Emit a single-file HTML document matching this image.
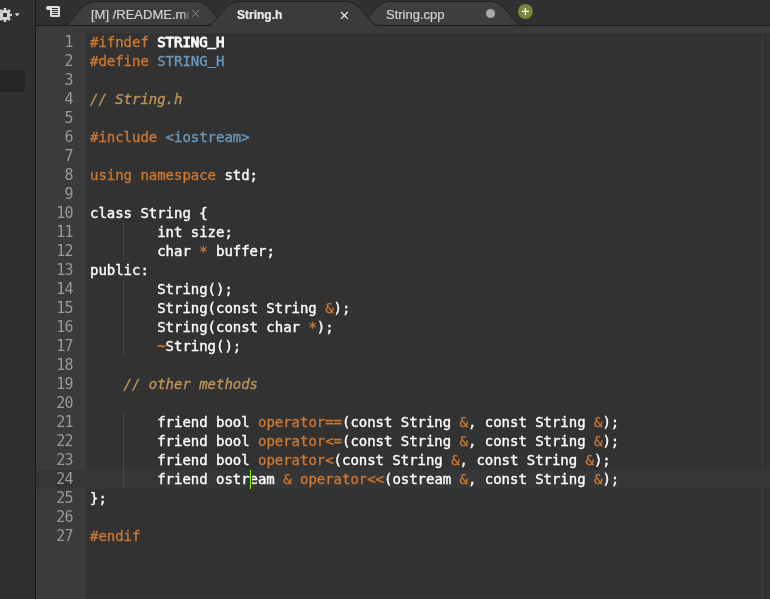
<!DOCTYPE html>
<html><head><meta charset="utf-8">
<style>
html,body{margin:0;padding:0;}
body{width:770px;height:599px;overflow:hidden;background:#323232;position:relative;font-family:"Liberation Sans",sans-serif;}
#side{position:absolute;left:0;top:0;width:35px;height:599px;background:#303030;border-right:1px solid #1b1b1b;}
#sel{position:absolute;left:0;top:70px;width:25px;height:22px;background:#252525;border-radius:0 3px 3px 0;}
#gear{position:absolute;left:0;top:0;}
#tabbar{position:absolute;left:36px;top:0;width:734px;height:25px;background:#303030;}
#tabs{position:absolute;left:36px;top:0;}
#lst{position:absolute;left:44px;top:4px;}
#strip{position:absolute;left:36px;top:26px;width:734px;height:7px;background:#3b3b3b;}
#gutter{position:absolute;left:36px;top:33px;width:50px;height:566px;background:#3b3b3b;}
#scroller{position:absolute;left:86px;top:33px;width:684px;height:566px;background:#323232;border-radius:3px 0 0 0;}
#active{position:absolute;left:36px;top:470px;width:734px;height:19px;background:#353637;}
#vline{position:absolute;left:762px;top:33px;width:1px;height:566px;background:#3b3b3b;}
#cursor{position:absolute;left:250px;top:470px;width:1px;height:19px;background:#91ff00;box-shadow:1px 0 0 #2a2536;}
.g{position:absolute;left:123px;width:1px;background:repeating-linear-gradient(to bottom,#5c5c5c 0,#5c5c5c 1px,transparent 1px,transparent 2px);}
#nums{will-change:transform;position:absolute;left:36px;top:33px;width:37px;text-align:right;color:#999;font:15px/19px "DejaVu Sans Mono","Liberation Mono",monospace;white-space:pre;letter-spacing:-0.63px;}
#code{will-change:transform;position:absolute;left:90px;top:33px;color:#fff;font:14px/19px "DejaVu Sans Mono","Liberation Mono",monospace;white-space:pre;letter-spacing:-0.03px;-webkit-text-stroke:0.35px;}
.k{color:#cc7833}.c{color:#bc9458;font-style:italic}.s{color:#6c99bb}.u{position:relative;top:-2px}.w{color:#fff;-webkit-text-stroke:0.9px}
.t{will-change:transform;position:absolute;top:0;height:25px;font-size:13px;line-height:29px;color:#d2d2d2;-webkit-text-stroke:0.2px;white-space:nowrap;overflow:hidden;}
#t1{left:91px;width:98px;-webkit-mask-image:linear-gradient(to right,#000 92px,transparent 99px);mask-image:linear-gradient(to right,#000 92px,transparent 99px);}
#t2{left:237px;color:#ededed;font-weight:bold;font-size:12px;line-height:31px;}
#t3{left:386px;}
</style></head><body>
<div id="side"><div id="sel"></div></div>
<svg id="gear" width="36" height="30" viewBox="0 0 36 30"><g transform="translate(5,15)" fill="#d4d4d4"><rect x="-1.3" y="-7" width="2.6" height="4" rx="0.6" transform="rotate(0)"/><rect x="-1.3" y="-7" width="2.6" height="4" rx="0.6" transform="rotate(45)"/><rect x="-1.3" y="-7" width="2.6" height="4" rx="0.6" transform="rotate(90)"/><rect x="-1.3" y="-7" width="2.6" height="4" rx="0.6" transform="rotate(135)"/><rect x="-1.3" y="-7" width="2.6" height="4" rx="0.6" transform="rotate(180)"/><rect x="-1.3" y="-7" width="2.6" height="4" rx="0.6" transform="rotate(225)"/><rect x="-1.3" y="-7" width="2.6" height="4" rx="0.6" transform="rotate(270)"/><rect x="-1.3" y="-7" width="2.6" height="4" rx="0.6" transform="rotate(315)"/><path fill-rule="evenodd" d="M0,-5.2A5.2,5.2 0 1 1 0,5.2A5.2,5.2 0 1 1 0,-5.2ZM-1.9,-1.9V1.9H1.9V-1.9Z"/></g><path d="M14.7,13.2H19.5L17.1,16.6Z" fill="#dcdcdc"/></svg>
<div id="tabbar"></div>
<div id="strip"></div>
<div id="gutter"></div>
<div id="scroller"></div>
<div id="active"></div>
<div id="vline"></div>
<svg id="tabs" width="734" height="27" viewBox="36 0 734 27">
<path d="M62,25.5 C74,25.5 78,1.5 96,1.5 L194.5,1.5 C212.5,1.5 216.5,25.5 228.5,25.5" fill="#3e3e3e" stroke="#202020" stroke-width="1"/>
<path d="M356.5,25.5 C368.5,25.5 372.5,1.5 390.5,1.5 L489.70000000000005,1.5 C507.70000000000005,1.5 511.70000000000005,25.5 523.7,25.5" fill="#3e3e3e" stroke="#202020" stroke-width="1"/>
<rect x="36" y="26" width="734" height="1" fill="#3b3b3b"/>
<path d="M206,25.5 C218,25.5 222,1.5 240,1.5 L345.5,1.5 C363.5,1.5 367.5,25.5 379.5,25.5 L379.5,27 L206,27 Z" fill="#3b3b3b" stroke="none" stroke-width="1"/>
<rect x="36" y="25" width="175" height="1" fill="#1b1b1b"/>
<rect x="374.5" y="25" width="396" height="1" fill="#1b1b1b"/>
<path d="M206,25.5 C218,25.5 222,1.5 240,1.5 L345.5,1.5 C363.5,1.5 367.5,25.5 379.5,25.5" fill="none" stroke="#202020" stroke-width="1"/>
<circle cx="490.5" cy="13.5" r="4.5" fill="#a9a9a9"/>
<circle cx="525.4" cy="11.4" r="7.5" fill="#76863a"/>
<path d="M521.9,11.4H528.9M525.4,7.9V14.9" stroke="#fff" stroke-width="1.3" fill="none"/>
<path d="M192.2,10.1L199,16.9M199,10.1L192.2,16.9" stroke="#8e8e8e" stroke-width="1" fill="none"/>
<path d="M341,12L347.8,18.8M347.8,12L341,18.8" stroke="#f0f0f0" stroke-width="1.2" fill="none"/>
</svg>
<svg id="lst" width="20" height="16" viewBox="44 4 20 16"><path d="M48,6H58.5A1.5,1.5 0 0 1 60,7.5V15.5A1.5,1.5 0 0 1 58.5,17H51.5A1.5,1.5 0 0 1 50,15.5V10H48A2,2 0 0 1 48,6Z" fill="#dedede"/><g fill="#2a2a2a"><rect x="52" y="8" width="6" height="1"/><rect x="52" y="10" width="6" height="1"/><rect x="52" y="12" width="6" height="1"/><rect x="52" y="14" width="6" height="1"/></g></svg>
<div class="t" id="t1">[M] /README.md</div>
<div class="t" id="t2">String.h</div>
<div class="t" id="t3">String.cpp</div>
<div class="g" style="top:223px;height:38px"></div><div class="g" style="top:280px;height:76px"></div><div class="g" style="top:413px;height:76px"></div>
<div id="nums">1
2
3
4
5
6
7
8
9
10
11
12
13
14
15
16
17
18
19
20
21
22
23
24
25
26
27</div>
<div id="code"><span class="k">#ifndef</span> <span class="w">STRING<span class="u">_</span>H</span>
<span class="k">#define</span> <span class="s">STRING<span class="u">_</span>H</span>

<span class="c">// String.h</span>

<span class="k">#include</span> <span class="s">&lt;iostream&gt;</span>

<span class="k">using namespace</span> std;

class String {
        int size;
        char <span class="k">*</span> buffer;
public:
        String();
        String(const String <span class="k">&amp;</span>);
        String(const char <span class="k">*</span>);
        <span class="k">~</span>String();

    <span class="c">// other methods</span>

        friend bool <span class="k">operator==</span>(const String <span class="k">&amp;</span>, const String <span class="k">&amp;</span>);
        friend bool <span class="k">operator&lt;=</span>(const String <span class="k">&amp;</span>, const String <span class="k">&amp;</span>);
        friend bool <span class="k">operator&lt;</span>(const String <span class="k">&amp;</span>, const String <span class="k">&amp;</span>);
        friend ostream <span class="k">&amp;</span> <span class="k">operator&lt;&lt;</span>(ostream <span class="k">&amp;</span>, const String <span class="k">&amp;</span>);
};

<span class="k">#endif</span></div>
<div id="cursor"></div>
</body></html>
